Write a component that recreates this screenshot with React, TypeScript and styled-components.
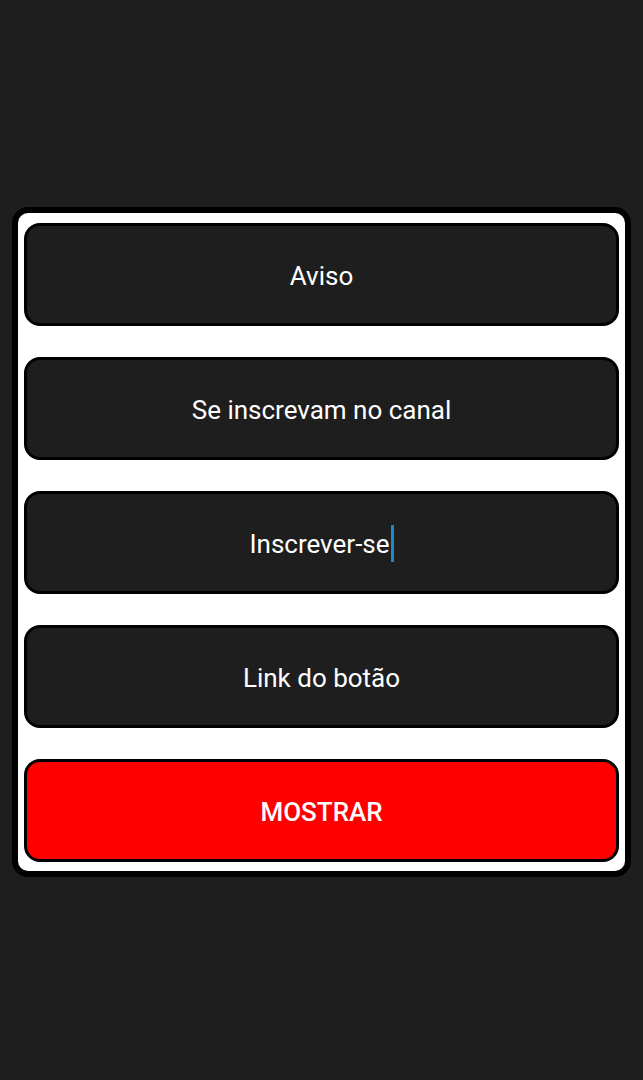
import * as React from 'react'
import styled, { createGlobalStyle } from 'styled-components'

const GlobalStyle = createGlobalStyle`
  html, body {
    margin: 0;
    padding: 0;
    background-color: #1e1e1e;
    font-family: Roboto, "Liberation Sans", sans-serif;
  }
`

const Page = styled.main`
  min-height: 1080px;
  padding: 207px 12px 0 12px;
  box-sizing: border-box;
`

const Card = styled.form`
  display: flex;
  flex-direction: column;
  gap: 31px;
  padding: 10px 6px 9px 6px;
  background-color: #fff;
  border: 6px solid #000;
  border-radius: 16px;
`

const Field = styled.div<{ $danger?: boolean }>`
  display: flex;
  align-items: center;
  justify-content: center;
  height: 103px;
  padding-top: 2px;
  box-sizing: border-box;
  border: 3px solid #000;
  border-radius: 16px;
  background-color: ${props => (props.$danger ? '#ff0000' : '#1e1e1e')};
  color: #fff;
  font-size: 26px;
  font-weight: ${props => (props.$danger ? 500 : 400)};
  cursor: ${props => (props.$danger ? 'pointer' : 'text')};
`

const Caret = styled.span`
  display: inline-block;
  width: 3px;
  height: 37px;
  margin-left: 1px;
  background-color: #1a8bd0;
`

export default function App () {
  return (
    <>
      <GlobalStyle />
      <Page>
        <Card onSubmit={e => e.preventDefault()}>
          <Field>Aviso</Field>
          <Field>Se inscrevam no canal</Field>
          <Field>
            Inscrever-se
            <Caret />
          </Field>
          <Field>Link do botão</Field>
          <Field $danger>MOSTRAR</Field>
        </Card>
      </Page>
    </>
  )
}
